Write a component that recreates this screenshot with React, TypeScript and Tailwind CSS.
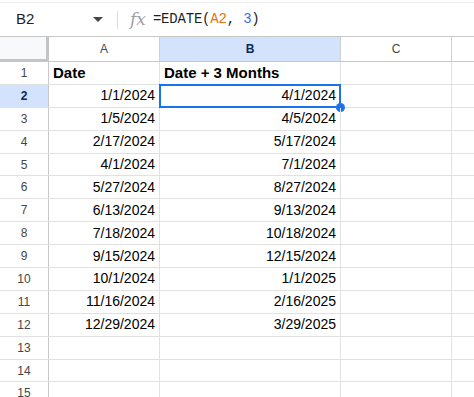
import React from "react";

const rows: [string, string][] = [
	["Date", "Date + 3 Months"],
	["1/1/2024", "4/1/2024"],
	["1/5/2024", "4/5/2024"],
	["2/17/2024", "5/17/2024"],
	["4/1/2024", "7/1/2024"],
	["5/27/2024", "8/27/2024"],
	["6/13/2024", "9/13/2024"],
	["7/18/2024", "10/18/2024"],
	["9/15/2024", "12/15/2024"],
	["10/1/2024", "1/1/2025"],
	["11/16/2024", "2/16/2025"],
	["12/29/2024", "3/29/2025"],
	["", ""],
	["", ""],
	["", ""],
];

const sans = "font-['Liberation_Sans',Arial,sans-serif]";

export default function App() {
	return (
		<div className={`w-[474px] h-[397px] overflow-hidden bg-white ${sans}`}>
			{/* formula bar */}
			<div className="h-[34px] border-t border-[#eeeeee] mt-[2px] flex items-center">
				<div className="w-[88px] pl-[16px] text-[15px] text-[#1f1f1f]">B2</div>
				<svg width="10" height="6" viewBox="0 0 10 6" className="ml-[5px] mt-[1px]">
					<path d="M0 0h10L5 5z" fill="#444746" />
				</svg>
				<div className="ml-[14px] w-px h-[18px] bg-[#dadce0]" />
				<div className="ml-[12px] text-[17px] italic text-[#9aa0a6] font-['DejaVu_Serif',serif] leading-none">
					fx
				</div>
				<div className="ml-[7px] text-[14px] font-['Liberation_Mono',monospace] text-[#1f1f1f] tracking-[-0.2px]">
					=EDATE(<span className="text-[#e8710a]">A2</span>, <span className="text-[#3c6ce0]">3</span>)
				</div>
			</div>

			{/* column headers */}
			<div className="flex h-[26px] border-y border-[#c7c7c7] text-[12px] text-[#444746]">
				<div className="w-[49px] shrink-0 border-r-[3px] border-b-[2px] border-[#c4c4c4] bg-[#f8f9fa]" />
				<div className="w-[111px] shrink-0 border-r border-[#d0d0d0] flex items-center justify-center">A</div>
				<div className="w-[181px] shrink-0 border-r border-[#d0d0d0] bg-[#d3e3fd] flex items-center justify-center font-bold text-[#0b2a5a]">
					B
				</div>
				<div className="w-[111px] shrink-0 border-r border-[#d0d0d0] flex items-center justify-center">C</div>
				<div className="flex-1" />
			</div>

			{/* rows */}
			{rows.map(([a, b], i) => {
				const n = i + 1;
				const selected = n === 2;
				const bold = n === 1;
				return (
					<div key={n} className="flex h-[22.9px] border-b border-[#e1e1e1] text-[14px] text-black">
						<div
							className={`w-[49px] shrink-0 border-r border-[#c7c7c7] flex items-center justify-center text-[12px] ${
								selected ? "bg-[#d3e3fd] font-bold text-[#0b2a5a]" : "text-[#444746]"
							}`}
						>
							{n}
						</div>
						<div
							className={`w-[111px] shrink-0 border-r border-[#e1e1e1] flex items-center px-[4px] ${
								bold ? "font-bold justify-start text-[15px]" : "justify-end"
							}`}
						>
							{a}
						</div>
						<div
							className={`relative w-[181px] shrink-0 border-r border-[#e1e1e1] flex items-center px-[4px] ${
								bold ? "font-bold justify-start text-[15px]" : "justify-end"
							}`}
						>
							{b}
							{selected && (
								<>
									<div className="absolute -left-px -top-px -right-px -bottom-px border-2 border-[#1a73e8]" />
									<div className="absolute right-[-5px] bottom-[-5px] w-[9px] h-[9px] rounded-full bg-[#1a73e8]" />
								</>
							)}
						</div>
						<div className="w-[111px] shrink-0 border-r border-[#e1e1e1]" />
						<div className="flex-1" />
					</div>
				);
			})}
		</div>
	);
}
